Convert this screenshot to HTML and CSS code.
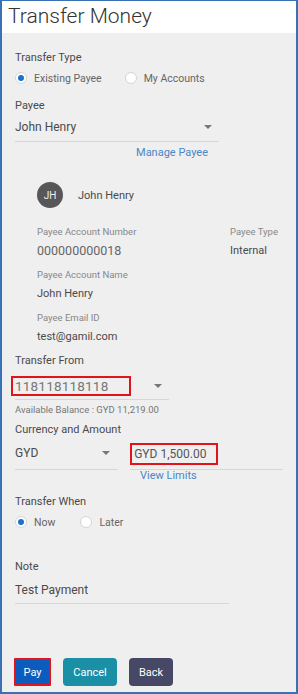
FILE: index.html
```html
<!DOCTYPE html>
<html>
<head>
  <title>Transfer Money</title>
  <link rel="stylesheet" href="styles.css">
</head>
<body>
  <div class="page">
    <div class="header">Transfer Money</div>

    <div class="content">
      <div class="label first">Transfer Type</div>
      <div class="radios">
        <label class="radio"><span class="dot checked"></span>Existing Payee</label>
        <label class="radio"><span class="dot"></span>My Accounts</label>
      </div>

      <div class="label payee-label">Payee</div>
      <div class="select payee-select">
        <span class="value">John Henry</span>
        <span class="arrow"></span>
      </div>
      <div class="link manage">Manage Payee</div>

      <div class="payee-card">
        <div class="person">
          <div class="avatar">JH</div>
          <span class="person-name">John Henry</span>
        </div>
        <div class="details">
          <div class="detail-main">
            <div class="d-label">Payee Account Number</div>
            <div class="d-value big">000000000018</div>
            <div class="d-label">Payee Account Name</div>
            <div class="d-value">John Henry</div>
            <div class="d-label">Payee Email ID</div>
            <div class="d-value">test@gamil.com</div>
          </div>
          <div class="detail-side">
            <div class="d-label">Payee Type</div>
            <div class="d-value">Internal</div>
          </div>
        </div>
      </div>

      <div class="label from-label">Transfer From</div>
      <div class="select from-select">
        <span class="value highlight acct">118118118118</span>
        <span class="arrow"></span>
      </div>
      <div class="hint">Available Balance : GYD 11,219.00</div>

      <div class="label amount-label">Currency and Amount</div>
      <div class="amount-row">
        <div class="select currency">
          <span class="value">GYD</span>
          <span class="arrow"></span>
        </div>
        <div class="select amount">
          <span class="value highlight amt">GYD 1,500.00</span>
        </div>
      </div>
      <div class="link limits">View Limits</div>

      <div class="label when-label">Transfer When</div>
      <div class="radios">
        <label class="radio now"><span class="dot checked"></span>Now</label>
        <label class="radio"><span class="dot"></span>Later</label>
      </div>

      <div class="label note-label">Note</div>
      <div class="select note">
        <span class="value">Test Payment</span>
      </div>
    </div>

    <div class="actions">
      <button class="btn pay">Pay</button>
      <button class="btn cancel">Cancel</button>
      <button class="btn back">Back</button>
    </div>
  </div>
</body>
</html>
```

FILE: styles.css
```css
body {
  margin: 0;
  font-family: Roboto, "Liberation Sans", sans-serif;
  color: #555;
}

.page {
  width: 298px;
  height: 694px;
  box-sizing: border-box;
  border: 2px solid #3a70b5;
  border-top-width: 1px;
  background: #efefef;
  display: flex;
  flex-direction: column;
}

.header {
  background: #fff;
  height: 32px;
  padding-left: 6px;
  font-size: 21px;
  font-weight: 300;
  line-height: 31px;
  color: #333;
}

.content {
  padding: 0 13px;
  flex: 1;
}

.label {
  font-size: 11px;
  line-height: 14px;
  color: #4a4a4a;
}

.first { margin-top: 18px; }
.payee-label { margin-top: 13px; }
.from-label { margin-top: 9px; }
.amount-label { margin-top: 7px; }
.when-label { margin-top: 13px; }
.note-label { margin-top: 30px; }

.radios {
  display: flex;
  margin-top: 5px;
  height: 16px;
  align-items: center;
}

.radio {
  display: flex;
  align-items: center;
  font-size: 10.5px;
  color: #666;
  margin-right: 23px;
}

.radio.now { margin-right: 25px; }

.dot {
  width: 12px;
  height: 12px;
  box-sizing: border-box;
  border-radius: 50%;
  background: #fff;
  border: 1px solid #d4d4d4;
  margin: 0 7px 0 0;
  display: flex;
  align-items: center;
  justify-content: center;
}

.dot.checked::after {
  content: "";
  width: 6px;
  height: 6px;
  border-radius: 50%;
  background: #1a73c8;
}

.select {
  display: flex;
  align-items: center;
  justify-content: space-between;
  border-bottom: 1px solid #d6d6d6;
  box-sizing: border-box;
}

.value {
  font-size: 12px;
  line-height: 16px;
  color: #4a4a4a;
}

.arrow {
  width: 0;
  height: 0;
  border-left: 4px solid transparent;
  border-right: 4px solid transparent;
  border-top: 4px solid #777;
  margin-right: 7px;
}

.payee-select {
  width: 204px;
  padding: 6px 0 6px;
}

.link {
  font-size: 11px;
  line-height: 14px;
  color: #4a86c8;
}

.manage {
  width: 193px;
  text-align: right;
  margin-top: 4px;
}

.payee-card {
  padding-left: 22px;
  margin-top: 22px;
}

.person {
  display: flex;
  align-items: center;
}

.avatar {
  width: 26px;
  height: 26px;
  border-radius: 50%;
  background: #575757;
  color: #f0f0f0;
  font-size: 10px;
  display: flex;
  align-items: center;
  justify-content: center;
  margin-right: 15px;
}

.person-name {
  font-size: 11px;
  color: #4a4a4a;
}

.details {
  display: flex;
  margin-top: 18px;
}

.detail-main {
  width: 193px;
}

.d-label {
  font-size: 9.5px;
  line-height: 12px;
  color: #888;
  margin-top: 10px;
}

.d-label:first-child { margin-top: 0; }

.d-value {
  font-size: 11px;
  line-height: 16px;
  color: #4a4a4a;
  margin-top: 5px;
}

.d-value.big {
  font-size: 12.5px;
  color: #666;
}

.from-select {
  width: 154px;
  padding: 4px 0 3px;
  margin-top: 4px;
}

.highlight {
  border: 2px solid #e2141b;
  box-sizing: border-box;
  margin-left: -4px;
  padding-left: 2px;
}

.acct {
  width: 120px;
  height: 20px;
  line-height: 17px;
  font-size: 13.5px;
  color: #777;
  letter-spacing: 0.2px;
}

.hint {
  font-size: 9.5px;
  line-height: 12px;
  color: #777;
  margin-top: 4px;
}

.amount-row {
  display: flex;
  margin-top: 3px;
}

.currency {
  width: 104px;
  padding: 2px 0 6px;
  height: 30px;
}

.currency .arrow { margin-right: 8px; }

.amount {
  width: 154px;
  margin-left: 12px;
  height: 30px;
  align-items: flex-start;
  padding-top: 3px;
}

.amt {
  width: 88px;
  height: 22px;
  line-height: 18px;
  margin-left: 0;
  padding-left: 2px;
  font-size: 12px;
  color: #555;
}

.limits {
  margin-left: 125px;
  line-height: 12px;
  margin-top: 0;
}

.note {
  width: 214px;
  padding: 8px 0 5px;
}

.note .value { font-size: 12px; }

.actions {
  display: flex;
  gap: 12px;
  padding: 0 0 6px 12px;
}

.btn {
  height: 28px;
  border: none;
  border-radius: 4px;
  color: #fff;
  font-family: Roboto, "Liberation Sans", sans-serif;
  font-size: 11px;
  padding: 0;
}

.pay {
  width: 37px;
  background: #0b5cbc;
  border: 2px solid #e2141b;
  border-radius: 1px;
}

.cancel {
  width: 54px;
  background: #1b8fa6;
}

.back {
  width: 44px;
  background: #474766;
}
```
